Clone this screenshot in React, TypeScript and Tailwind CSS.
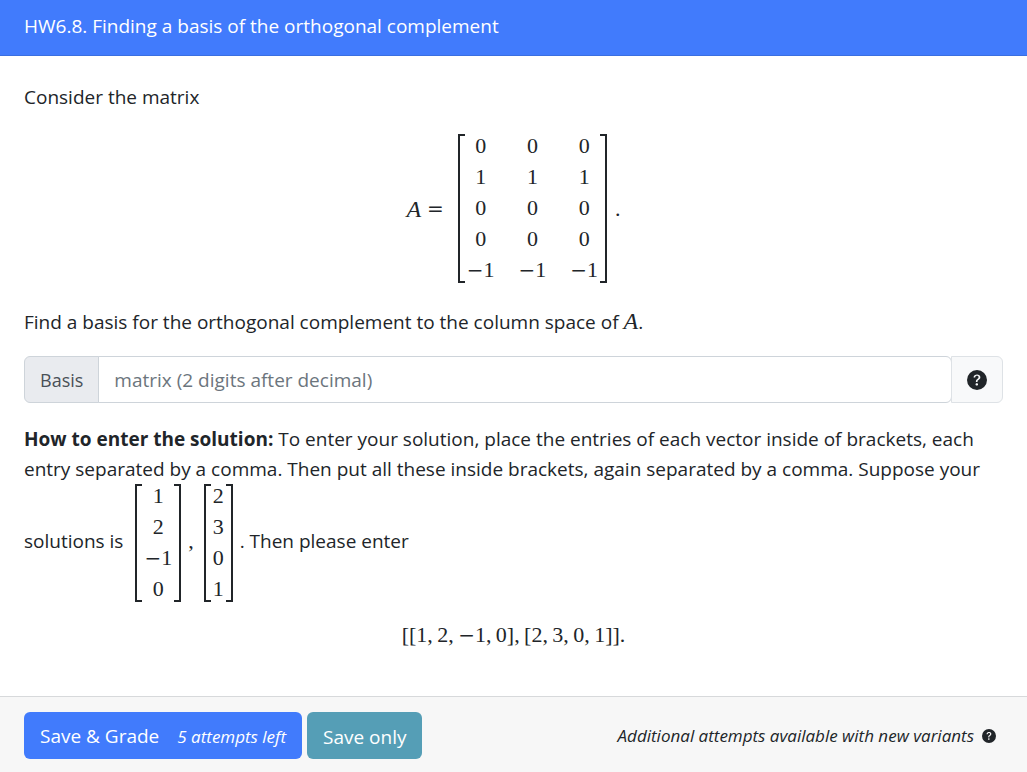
import { BsQuestionCircleFill } from 'react-icons/bs';

const MATRIX_A = [
    [0, 1, 0, 0, -1],
    [0, 1, 0, 0, -1],
    [0, 1, 0, 0, -1],
];

// Liberation Serif has short operators, the DejaVu ones are as wide as in TeX
function Operator({ sign }: { sign: string }) {
    return <span className="font-['DejaVu_Serif',serif] text-xl leading-none">{sign}</span>;
}

function Entry({ value }: { value: number }) {
    return (
        <span className="block text-center">
            {value < 0 && <Operator sign="−" />}
            {Math.abs(value)}
        </span>
    );
}

// columns are drawn one by one, the way column vectors are stored
function Matrix({ columns }: { columns: number[][] }) {
    return (
        <span className="inline-flex items-stretch align-middle font-['Liberation_Serif',serif] text-[22px] leading-[21px]">
            <span className="w-[7px] border-2 border-r-0 border-[#212529]" />
            <span className="flex gap-6 px-[2px] pt-px pb-[3px]">
                {columns.map((column, i) => (
                    <span key={i} className="flex flex-col gap-[10px]">
                        {column.map((value, j) => (
                            <Entry key={j} value={value} />
                        ))}
                    </span>
                ))}
            </span>
            <span className="w-[7px] border-2 border-l-0 border-[#212529]" />
        </span>
    );
}

export default function App() {
    return (
        <div className="flex min-h-screen flex-col bg-white font-['Open_Sans',sans-serif] text-[19px] leading-[30px] text-[#212529]">
            <header className="border-b border-[#3a6fe0] bg-[#417bfc] px-6 pt-[11px] pb-[14px] text-white">
                <h1>HW6.8. Finding a basis of the orthogonal complement</h1>
            </header>

            <main className="flex-1 px-6 pt-[26px] pb-5">
                <p>Consider the matrix</p>

                <div className="mt-[22px] mb-6 flex items-center justify-center font-['Liberation_Serif',serif] text-[22px]">
                    <i className="text-2xl leading-[30px]">A</i>
                    <span className="mr-[14px] ml-[6px]">
                        <Operator sign="=" />
                    </span>
                    <Matrix columns={MATRIX_A} />
                    <span className="ml-2">.</span>
                </div>

                <p>
                    Find a basis for the orthogonal complement to the column space of{' '}
                    <i className="font-['Liberation_Serif',serif] text-2xl leading-none">A</i>.
                </p>

                <div className="mt-[19px] mb-[21px] flex">
                    <label
                        htmlFor="basis"
                        className="rounded-l-md border border-[#ced4da] bg-[#e9ebef] px-[15px] pt-[8px] pb-[7px] text-lg leading-[30px] text-[#495057]"
                    >
                        Basis
                    </label>
                    <input
                        id="basis"
                        type="text"
                        placeholder="matrix (2 digits after decimal)"
                        className="-ml-px min-w-0 flex-1 rounded-r-md border border-[#ced4da] px-[15px] pt-[8px] pb-[7px] outline-none placeholder:text-[#6c757d]"
                    />
                    <button
                        type="button"
                        aria-label="Help"
                        className="-ml-px cursor-pointer rounded-r-md border border-[#dee2e6] bg-[#f8f9fa] px-[15px]"
                    >
                        <BsQuestionCircleFill size={20} />
                    </button>
                </div>

                <p>
                    <strong>How to enter the solution:</strong> To enter your solution, place the entries of each
                    vector inside of brackets, each entry separated by a comma. Then put all these inside brackets,
                    again separated by a comma. Suppose your solutions is{' '}
                    <span className="mx-[7px] inline-block align-middle">
                        <Matrix columns={[[1, 2, -1, 0]]} />
                        <span className="mr-[10px] ml-[7px] font-['Liberation_Serif',serif] text-[22px]">,</span>
                        <Matrix columns={[[2, 3, 0, 1]]} />
                    </span>
                    . Then please enter
                </p>

                <p className="mt-[18px] text-center font-['Liberation_Serif',serif] text-[22px]">
                    [[1,&thinsp;2,&thinsp;
                    <Operator sign="−" />
                    1,&thinsp;0],&thinsp;[2,&thinsp;3,&thinsp;0,&thinsp;1]].
                </p>
            </main>

            <footer className="flex items-center justify-between border-t border-[#d7d9db] bg-[#f7f7f7] pt-[15px] pr-[31px] pb-[13px] pl-6">
                <div className="flex gap-[5px]">
                    <button
                        type="button"
                        className="cursor-pointer rounded-md bg-[#417bfc] px-4 pt-[9px] pb-[7px] text-white"
                    >
                        Save &amp; Grade
                        <i className="ml-[18px] text-[17px]">5 attempts left</i>
                    </button>
                    <button
                        type="button"
                        className="cursor-pointer rounded-md bg-[#559eb6] px-4 pt-[9px] pb-[7px] text-white"
                    >
                        Save only
                    </button>
                </div>
                <div className="flex items-center gap-2 text-[17px]">
                    <i>Additional attempts available with new variants</i>
                    <button type="button" aria-label="About new variants" className="cursor-pointer">
                        <BsQuestionCircleFill size={14} />
                    </button>
                </div>
            </footer>
        </div>
    );
}
